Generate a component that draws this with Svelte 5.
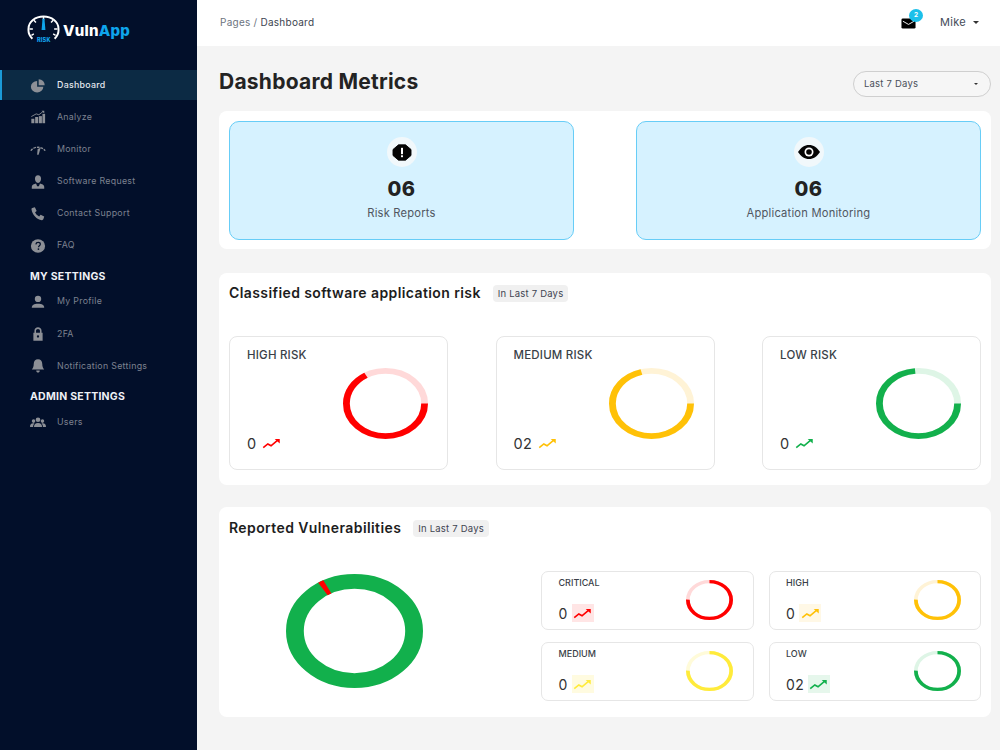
<script>
  const navTop = [
    { label: 'Dashboard', icon: 'pie', active: true },
    { label: 'Analyze', icon: 'bars' },
    { label: 'Monitor', icon: 'gauge' },
    { label: 'Software Request', icon: 'agent' },
    { label: 'Contact Support', icon: 'phone' },
    { label: 'FAQ', icon: 'help' }
  ];
  const navSettings = [
    { label: 'My Profile', icon: 'user' },
    { label: '2FA', icon: 'lock' },
    { label: 'Notification Settings', icon: 'bell' }
  ];
  const navAdmin = [{ label: 'Users', icon: 'users' }];
  const risks = [
    { title: 'HIGH RISK', value: '0', color: '#ff0000', light: '#ffd9d9', arc: 240, start: 90 },
    { title: 'MEDIUM RISK', value: '02', color: '#ffc107', light: '#fff3d6', arc: 255, start: 90 },
    { title: 'LOW RISK', value: '0', color: '#12b04c', light: '#def5e6', arc: 265, start: 90 }
  ];
  const vulns = [
    { title: 'CRITICAL', value: '0', color: '#ff0000', light: '#ffd9d9', box: '#ffe5e5' },
    { title: 'HIGH', value: '0', color: '#ffc107', light: '#fff3d6', box: '#fff8e6' },
    { title: 'MEDIUM', value: '0', color: '#ffeb3b', light: '#fffbd9', box: '#fffbe0' },
    { title: 'LOW', value: '02', color: '#12b04c', light: '#def5e6', box: '#e6f7ec' }
  ];
</script>

{#snippet navIcon(name)}
  <svg class="nav-icon" viewBox="0 0 18 18" fill="currentColor" aria-hidden="true">
    {#if name === 'pie'}
      <path d="M8 4.500v6.500h7a7 6.500 0 1 1-7-6.500z" /><path d="M9.800 2.500a7 6.500 0 0 1 6.700 6.800H9.800z" />
    {:else if name === 'bars'}
      <rect x="1.500" y="11" width="3.400" height="5" /><rect x="5.800" y="9" width="3.400" height="7" /><rect x="10" y="8" width="3.400" height="8" /><rect x="14" y="5.500" width="3" height="10.500" />
      <path d="M1.500 8.500 7 5.500l3 1 4.500-3.500" fill="none" stroke="currentColor" stroke-width="1" /><path d="M13 2h3v3z" />
    {:else if name === 'gauge'}
      <path d="M1 11a8.500 6 0 0 1 16 0" fill="none" stroke="currentColor" stroke-width="1.500" stroke-dasharray="3 1" /><path d="m8 15.500.6-6.500 3.400-1.500-2.300 8z" />
    {:else if name === 'agent'}
      <path d="M9 1.500c2.300 0 3.400 1.700 3.400 3.900S11.300 10 9 10 5.600 7.600 5.600 5.400 6.700 1.500 9 1.500z" /><path d="M2 16.500v-2.200c0-1.800 2.700-3 4.800-3.500l1.200 3h2l1.200-3c2.100.5 4.800 1.700 4.800 3.500v2.200z" />
    {:else if name === 'phone'}
      <path d="M2.500 2.300 5.500 1.500l2 4-1.800 1.500c.8 2 2.400 3.600 4.600 4.700l1.600-1.800 4.100 2-1 3.100c-.3.700-1 1-1.700.9C7.500 15.100 2.600 10 1.700 3.900c-.1-.7.200-1.400.8-1.600z" />
    {:else if name === 'help'}
      <ellipse cx="9" cy="9" rx="8" ry="7.500" />
      <path d="M6.600 7.200C6.800 5.800 7.800 5 9.200 5c1.400 0 2.400.8 2.400 2 0 1.800-2 1.700-2 3.300" fill="none" stroke="#020f2a" stroke-width="1.400" /><circle cx="9.500" cy="12.500" r="1" fill="#020f2a" />
    {:else if name === 'user'}
      <ellipse cx="9" cy="5.500" rx="3.600" ry="3.500" /><path d="M2 15.500c0-3 2.500-4.500 7-4.500s7 1.500 7 4.500z" />
    {:else if name === 'lock'}
      <path fill-rule="evenodd" d="M5 7.500V5.300C5 3 6.800 1.500 9 1.500s4 1.500 4 3.800v2.200h1.200v9H3.800v-9zm1.800 0h4.400V5.300c0-1.200-1-2-2.200-2s-2.200.8-2.200 2zM9 10.500a1.300 1.300 0 1 0 0 2.600 1.300 1.300 0 0 0 0-2.600z" />
    {:else if name === 'bell'}
      <path d="M9 1.500c3 0 4.800 2.200 4.800 5.200 0 3 .9 4.600 2.200 6.300H2c1.300-1.700 2.200-3.300 2.200-6.300 0-3 1.800-5.200 4.800-5.200z" /><path d="M7 14h4c0 1.500-.9 2.300-2 2.300S7 15.500 7 14z" />
    {:else if name === 'users'}
      <circle cx="9" cy="6.500" r="2.600" /><circle cx="4" cy="8" r="2" /><circle cx="14" cy="8" r="2" />
      <path d="M4.500 14.500c0-3 1.500-4.500 4.500-4.500s4.500 1.500 4.500 4.500z" /><path d="M0 14.500c0-2.500 1.200-4 3.500-4 .6 0 1 .1 1.500.3-1 1-1.500 2.200-1.500 3.700zM18 14.500c0-2.500-1.200-4-3.500-4-.6 0-1 .1-1.500.3 1 1 1.500 2.200 1.500 3.700z" />
    {/if}
  </svg>
{/snippet}

{#snippet navList(items)}
  {#each items as item}
    <a class="nav-item" class:active={item.active} href="#top">
      {@render navIcon(item.icon)}
      <span>{item.label}</span>
    </a>
  {/each}
{/snippet}

{#snippet ring(cls, color, light, arc, start)}
  <svg class={cls} viewBox="0 0 100 100" preserveAspectRatio="none" aria-hidden="true">
    <circle cx="50" cy="50" r="46" fill="none" stroke={light} stroke-width="8" />
    <circle cx="50" cy="50" r="46" fill="none" stroke={color} stroke-width="8" pathLength="360"
      stroke-dasharray="{arc} 360" transform="rotate({start - 90} 50 50)" />
  </svg>
{/snippet}

{#snippet trend(color)}
  <svg class="trend" viewBox="0 0 20 12" fill="none" aria-hidden="true">
    <path d="M1 10.500 6 6.500l3.500 2L16.500 2.500" stroke={color} stroke-width="1.800" />
    <path d="M13.500 1H19v5z" fill={color} />
  </svg>
{/snippet}

<div class="app">
  <aside class="sidebar">
    <div class="logo">
      <svg class="logo-mark" viewBox="0 0 34 30" aria-hidden="true">
        <path d="M5.500 24.500A15 13.500 0 0 1 1.500 14 15.500 12.500 0 0 1 32.500 14a15 13.500 0 0 1-4 10.500" fill="none" stroke="#fff" stroke-width="2" />
        <path d="M17 2v3.500M7 5.500l2.200 2.200M27 5.500l-2.200 2.200M2.500 14.500h3.500M31.500 14.500h-3.500M4.500 21l2.500-1.500M29.500 21 27 19.500" stroke="#fff" stroke-width="1.500" />
        <path d="M16 4h2l1 11.500h-4z" fill="#0ea5ec" />
      </svg>
      <span class="risk-tag">RISK</span>
      <span class="logo-text">Vuln<b>App</b></span>
    </div>
    <nav>
      {@render navList(navTop)}
      <h3>MY SETTINGS</h3>
      {@render navList(navSettings)}
      <h3>ADMIN SETTINGS</h3>
      {@render navList(navAdmin)}
    </nav>
  </aside>

  <div class="main">
    <header class="topbar">
      <div class="crumbs"><span>Pages</span> / <span class="here">Dashboard</span></div>
      <div class="top-right">
        <div class="mail">
          <svg viewBox="0 0 16 12" preserveAspectRatio="none" aria-hidden="true">
            <rect x="0.500" y="0.500" width="15" height="11" rx="1.500" fill="#000" />
            <path d="m2 3.500 6 3.500 6-3.500" fill="none" stroke="#fff" stroke-width="1" />
          </svg>
          <span class="mail-badge">2</span>
        </div>
        <div class="user">Mike <i class="caret"></i></div>
      </div>
    </header>

    <main class="content">
      <div class="title-row">
        <h1>Dashboard Metrics</h1>
        <div class="select">Last 7 Days <i class="caret small"></i></div>
      </div>

      <section class="panel stats">
        <div class="stat">
          <div class="stat-icon">
            <svg class="octagon" viewBox="0 0 20 20" preserveAspectRatio="none" aria-hidden="true">
              <path d="M6.500 1h7L19 6.500v7L13.500 19h-7L1 13.500v-7z" fill="#050505" stroke="#050505" stroke-linejoin="round" />
              <rect x="9" y="4.500" width="2" height="7.500" fill="#fff" /><rect x="9" y="13.300" width="2" height="2.200" fill="#fff" />
            </svg>
          </div>
          <strong>06</strong>
          <span>Risk Reports</span>
        </div>
        <div class="stat">
          <div class="stat-icon">
            <svg class="eye" viewBox="0 0 24 16" aria-hidden="true">
              <path d="M1 8c3-4.500 6.500-7 11-7s8 2.500 11 7c-3 4.500-6.500 7-11 7S4 12.500 1 8z" fill="#050505" />
              <circle cx="12" cy="8" r="4.500" fill="#fff" /><circle cx="12" cy="8" r="2.800" fill="#050505" />
            </svg>
          </div>
          <strong>06</strong>
          <span>Application Monitoring</span>
        </div>
      </section>

      <section class="panel risk-panel">
        <div class="panel-head">
          <h2>Classified software application risk</h2>
          <span class="tag">In Last 7 Days</span>
        </div>
        <div class="risk-row">
          {#each risks as r}
            <div class="risk-card">
              <div class="risk-left">
                <h4>{r.title}</h4>
                <div class="value">{r.value} {@render trend(r.color)}</div>
              </div>
              {@render ring('ring-lg', r.color, r.light, r.arc, r.start)}
            </div>
          {/each}
        </div>
      </section>

      <section class="panel vuln-panel">
        <div class="panel-head">
          <h2>Reported Vulnerabilities</h2>
          <span class="tag">In Last 7 Days</span>
        </div>
        <div class="vuln-body">
          <div class="donut-wrap">
            <svg class="donut" viewBox="0 0 100 100" preserveAspectRatio="none" aria-hidden="true">
              <circle cx="50" cy="50" r="43.500" fill="none" stroke="#12b04c" stroke-width="13" />
              <circle cx="50" cy="50" r="43.500" fill="none" stroke="#ff0000" stroke-width="13" pathLength="360"
                stroke-dasharray="5 360" transform="rotate(-122 50 50)" />
            </svg>
          </div>
          <div class="vuln-grid">
            {#each vulns as v}
              <div class="vuln-card">
                <div class="vuln-left">
                  <h5>{v.title}</h5>
                  <div class="value sm">{v.value} <span class="trend-box" style:background={v.box}>{@render trend(v.color)}</span></div>
                </div>
                {@render ring('ring-sm', v.color, v.light, 270, 0)}
              </div>
            {/each}
          </div>
        </div>
      </section>
    </main>
  </div>
</div>

<style>
  :global(body) {
    margin: 0;
    font-family: Inter, "Open Sans", "Liberation Sans", sans-serif;
    background: #f4f4f4;
    color: #222;
  }
  h1, h2, h3, h4, h5 { margin: 0; }
  .app { display: flex; width: 1000px; height: 750px; overflow: hidden; }

  .sidebar { width: 197px; flex: none; background: #020f2a; color: #7d8290; }
  .logo { position: relative; height: 70px; display: flex; align-items: flex-start; padding: 15px 0 0 27px; box-sizing: border-box; gap: 3px; }
  .logo-mark { width: 33px; height: 29px; flex: none; }
  .risk-tag { position: absolute; left: 36px; top: 37px; font-size: 5.500px; font-weight: 800; color: #12a5ef; background: #020f2a; padding: 0 1px; letter-spacing: .2px; }
  .logo-text { font-size: 15px; font-weight: 800; color: #fff; margin-top: 6px; letter-spacing: .2px; }
  .logo-text b { color: #0ea5ec; font-weight: 800; }

  .nav-item { display: flex; align-items: center; height: 30px; margin-bottom: 2.200px; padding-left: 30px; box-sizing: border-box; color: #7d8290; text-decoration: none; font-size: 8.800px; font-weight: 400; letter-spacing: .3px; }
  .nav-item span { margin-left: 11px; margin-top: -2px; }
  .nav-item.active { background: #0c2a44; box-shadow: inset 2px 0 0 #1b9ad8; color: #e4e8ee; font-weight: 500; }
  .nav-icon { width: 16px; height: 16px; flex: none; color: #8c8f96; }
  nav h3 { font-size: 10.500px; font-weight: 700; color: #eef1f6; padding-left: 30px; height: 16px; line-height: 16px; margin: 8px 0 2px; letter-spacing: .25px; }

  .main { flex: 1; min-width: 0; display: flex; flex-direction: column; }
  .topbar { height: 46px; flex: none; background: #fff; display: flex; align-items: center; justify-content: space-between; padding: 0 21px 0 23px; box-sizing: border-box; }
  .crumbs { font-size: 10px; color: #6c7480; letter-spacing: .25px; margin-top: -2px; }
  .crumbs .here { color: #3c4450; }
  .top-right { display: flex; align-items: center; gap: 24px; margin-top: -2px; }
  .mail { position: relative; width: 15px; height: 11px; margin-top: 3px; }
  .mail svg { display: block; width: 15px; height: 11px; }
  .mail-badge { position: absolute; left: 8px; top: -9px; width: 14px; height: 13px; border-radius: 50%; background: #1cc0ea; color: #fff; font-size: 6.500px; font-weight: 700; text-align: center; line-height: 13px; }
  .user { font-size: 11px; color: #444b58; letter-spacing: .3px; display: flex; align-items: center; gap: 7px; }
  .caret { display: inline-block; width: 0; height: 0; border: 3.500px solid transparent; border-top-color: #333; border-bottom: 0; }
  .caret.small { border-width: 2.500px; border-bottom: 0; border-top-color: #333; }

  .content { padding: 0 9px 0 22px; }
  .title-row { height: 65px; box-sizing: border-box; padding-top: 6px; display: flex; align-items: center; justify-content: space-between; }
  h1 { font-size: 21px; font-weight: 700; color: #232323; letter-spacing: .25px; }
  .select { width: 138px; height: 26px; box-sizing: border-box; border: 1px solid #cfcfcf; border-radius: 13px; padding: 0 12px 0 10px; display: flex; align-items: center; justify-content: space-between; font-size: 9.500px; color: #4a4f5a; letter-spacing: .2px; background: #f6f6f6; margin-top: 4px; }

  .panel { background: #fff; border-radius: 8px; box-sizing: border-box; }
  .stats { height: 138px; padding: 10px; display: flex; justify-content: space-between; }
  .stat { width: 345px; height: 119px; box-sizing: border-box; background: #d6f2ff; border: 1px solid #67cdf7; border-radius: 10px; display: flex; flex-direction: column; align-items: center; padding-top: 15px; }
  .stat-icon { width: 30px; height: 30px; border-radius: 50%; background: #f1f8fb; display: flex; align-items: center; justify-content: center; }
  .octagon { width: 20px; height: 17px; }
  .eye { width: 24px; height: 16px; }
  .stat strong { font-size: 20px; font-weight: 800; color: #222; margin-top: 9px; line-height: 26px; letter-spacing: .4px; }
  .stat span { font-size: 11.200px; color: #50565f; margin-top: 4px; letter-spacing: .2px; }

  .risk-panel { height: 212px; margin-top: 24px; padding: 10px 10px 0; }
  .panel-head { display: flex; align-items: center; gap: 12px; height: 18px; }
  h2 { font-size: 14px; font-weight: 600; color: #1d1d1d; letter-spacing: .4px; white-space: nowrap; }
  .tag { font-size: 9.500px; color: #3e4450; background: #f0f0f0; border-radius: 4px; padding: 0 5px; height: 17px; line-height: 17px; white-space: nowrap; letter-spacing: .2px; margin-top: 3px; }
  .risk-row { display: flex; justify-content: space-between; margin-top: 35px; }
  .risk-card { width: 219px; height: 134px; box-sizing: border-box; border: 1px solid #e6e6e6; border-radius: 8px; position: relative; display: flex; justify-content: space-between; padding: 0 19.500px 0 17px; }
  .risk-left { display: flex; flex-direction: column; justify-content: space-between; padding: 11px 0 17px; }
  h4 { font-size: 11.500px; font-weight: 500; color: #3a3f48; letter-spacing: .2px; }
  .value { display: flex; align-items: center; gap: 6px; font-size: 14.500px; color: #333; letter-spacing: .3px; }
  .trend { width: 19px; height: 11px; flex: none; }
  :global(.ring-lg) { width: 85px; height: 71px; margin-top: 31px; flex: none; }

  .vuln-panel { height: 210px; margin-top: 22px; padding: 11px 10px 0; }
  .vuln-body { display: grid; grid-template-columns: 251px 1fr; gap: 61px; margin-top: 35px; }
  .donut-wrap { display: flex; justify-content: center; padding-top: 3px; }
  .donut { width: 137px; height: 114px; }
  .vuln-grid { display: grid; grid-template-columns: 1fr 1fr; gap: 12px 15px; }
  .vuln-card { height: 59px; box-sizing: border-box; border: 1px solid #e6e6e6; border-radius: 7px; display: flex; justify-content: space-between; padding: 0 19.500px 0 16.500px; }
  .vuln-left { display: flex; flex-direction: column; justify-content: space-between; padding: 5px 0 7px; }
  h5 { font-size: 9px; font-weight: 500; color: #3a3f48; }
  .value.sm { font-size: 14px; gap: 4px; }
  .trend-box { display: flex; align-items: center; justify-content: center; width: 22px; height: 18px; }
  .trend-box .trend { width: 19px; height: 11px; }
  :global(.ring-sm) { width: 47px; height: 40px; margin-top: 8px; flex: none; }
</style>
